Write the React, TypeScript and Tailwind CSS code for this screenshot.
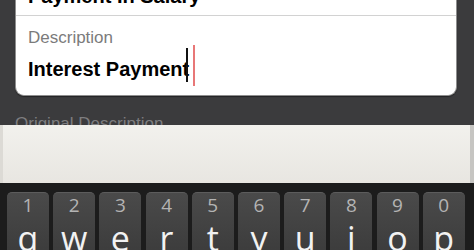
import React from "react";

const keys = [
  ["1", "q"],
  ["2", "w"],
  ["3", "e"],
  ["4", "r"],
  ["5", "t"],
  ["6", "y"],
  ["7", "u"],
  ["8", "i"],
  ["9", "o"],
  ["0", "p"],
];

export default function App() {
  return (
    <div className="w-[474px] h-[250px] overflow-hidden bg-[#3b3b3d] flex flex-col">
      <div className="h-[125px] shrink-0 overflow-hidden flex flex-col pl-[15px] pr-[17px] font-['Liberation_Sans',Arial,sans-serif]">
        <div className="-mt-[30px] bg-white rounded-b-[9px] border border-t-0 border-[#8e8e8e] shadow-[0_1px_1px_rgba(0,0,0,0.4)]">
          <div className="h-[46px] pt-[16px] px-[12px] border-b border-[#d2d2d2] text-[20px] leading-[20px] font-bold text-black">
            Payment In Salary
          </div>
          <div className="pt-[13px] pb-[16px] px-[12px]">
            <div className="text-[17px] leading-[17px] text-[#7b7b7b]">Description</div>
            <div className="mt-[13px] text-[20px] leading-[20px] font-bold text-black">
              <span className="relative">
                Interest Payment
                <span className="absolute right-[1px] top-[-10px] w-[2px] h-[34px] bg-[#111]" />
                <span className="absolute right-[-6px] top-[-13px] w-[2px] h-[41px] bg-[#e87777]" />
              </span>
            </div>
          </div>
        </div>
        <div className="mt-[19px] text-[17px] leading-[17px] text-[#7e7e80]">Original Description</div>
      </div>
      <div className="h-[58px] shrink-0 flex">
        <div className="w-[3px] bg-[#dcdad5]" />
        <div className="flex-1 bg-gradient-to-b from-[#f2f1ed] to-[#e8e6e1]" />
        <div className="w-[4px] bg-[#c6c5c2]" />
      </div>
      <div className="flex-1 bg-[#1c1c1c] pt-[9px] pl-[7px] flex gap-[4.2px] font-['Open_Sans',sans-serif]">
        {keys.map(([d, l]) => (
          <div
            key={d}
            className="w-[42px] h-[70px] shrink-0 rounded-t-[5px] border-t border-[#5c5c5c] bg-gradient-to-b from-[#4a4a4a] to-[#3a3a3a] flex flex-col items-center"
          >
            <div className="pt-[3px] text-[19px] leading-[19px] text-[#b4b4b4]">{d}</div>
            <div className="mt-[6px] text-[34px] leading-[34px] text-[#f2f2f2]">{l}</div>
          </div>
        ))}
      </div>
    </div>
  );
}
